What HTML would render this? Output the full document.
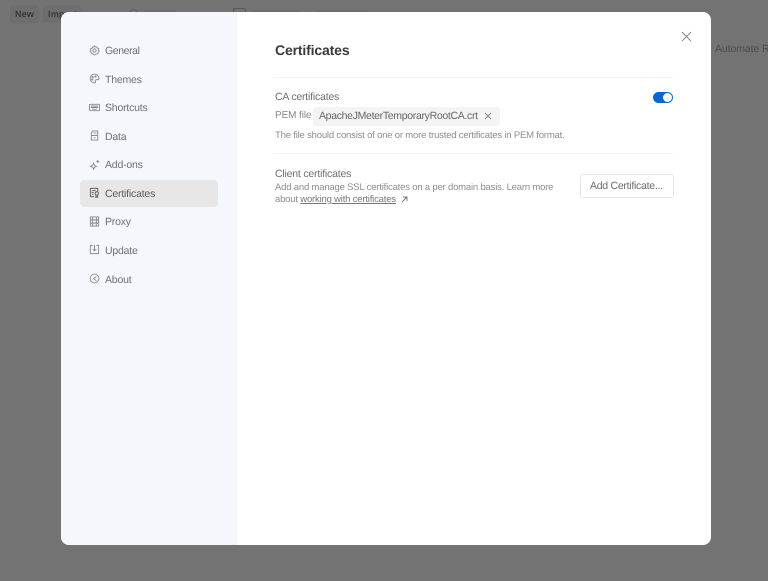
<!DOCTYPE html>
<html><head><meta charset="utf-8">
<style>
*{box-sizing:border-box}
html,body{margin:0;padding:0;width:768px;height:581px;overflow:hidden;background:#737373;font-family:"Liberation Sans",sans-serif;text-rendering:geometricPrecision}
.a{position:absolute;white-space:nowrap}
#modal{left:61px;top:12px;width:650px;height:533px;background:#fff;border-radius:8px;overflow:hidden}
#side{left:0;top:0;width:176px;height:533px;background:#f4f7fc;border-right:1px solid #f1f3f6}
.n{font-size:10.5px;color:#707070;left:105px;letter-spacing:-.2px;line-height:14px}
.i{left:89px;width:11px;height:11px}
.i *{fill:none;stroke:#8a8a8a;stroke-width:1}
.t{color:#707070;font-size:10.5px;line-height:14px;letter-spacing:-.2px}
.s{color:#8e8e8e;font-size:9.5px;line-height:13px;letter-spacing:-.19px}
.b{height:2px;top:10px;background:#6e6e6e}
</style></head><body>
<div class="a" style="left:10px;top:5px;width:29px;height:18px;background:#6e6e6e;border-radius:3px"></div>
<div class="a" style="left:15px;top:8px;font-size:9px;font-weight:bold;line-height:12px;color:#363636;letter-spacing:.2px">New</div>
<div class="a" style="left:43px;top:5px;width:38px;height:18px;background:#6e6e6e;border-radius:3px"></div>
<div class="a" style="left:48px;top:8px;font-size:9px;font-weight:bold;line-height:12px;color:#3a3a3a;letter-spacing:.2px">Import</div>
<div class="a" style="left:715px;top:42px;font-size:10.5px;line-height:14px;color:#4c4c4c;letter-spacing:-.1px">Automate Runs</div>
<div class="a" style="left:233px;top:8px;width:13px;height:6px;border:1px solid #585858;border-bottom:0;border-radius:2px 2px 0 0"></div>
<div class="a" style="left:130px;top:9px;width:7px;height:5px;border:1px solid #626262;border-bottom:0;border-radius:3px 3px 0 0"></div>
<div class="a b" style="left:145px;width:30px"></div>
<div class="a b" style="left:252px;width:48px"></div>
<div class="a b" style="left:316px;width:52px"></div>

<div class="a" id="modal"><div class="a" id="side"></div></div>
<div class="a" style="left:80px;top:180px;width:138px;height:27px;background:#e7e7e7;border-radius:4px"></div>

<svg class="a i" style="top:45px" viewBox="0 0 12 12"><path d="M6 1l1 1.200 1.600-.3.500 1.500 1.500.6-.4 1.500.9 1.500-1.200 1-.2 1.600-1.600.1L6 11l-1.600-1.300-1.500-.2-.3-1.500L1.300 7 2 5.500 1.800 4l1.500-.5.600-1.400 1.300.1z"/><circle cx="6" cy="6" r="1.800"/></svg>
<div class="a n" style="top:44px;letter-spacing:-.4px">General</div>
<svg class="a i" style="top:73px" viewBox="0 0 12 12"><path d="M6 1.200a4.800 4.800 0 1 0 0 9.600c1.300 0 1.300-1 .9-1.700-.5-.9 0-1.800 1-1.800h1.500c1 0 1.400-.7 1.400-1.500C10.800 3 8.600 1.200 6 1.200z"/><circle cx="4" cy="4.500" r=".7"/><circle cx="7" cy="3.800" r=".7"/><circle cx="3.500" cy="7" r=".7"/></svg>
<div class="a n" style="top:73px">Themes</div>
<svg class="a i" style="top:102px" viewBox="0 0 12 12"><rect x=".5" y="2.500" width="11" height="7" rx=".8"/><path d="M2 4.500h8M2 6h8M3.500 7.800h5"/></svg>
<div class="a n" style="top:101px">Shortcuts</div>
<svg class="a i" style="top:130px" viewBox="0 0 12 12"><path d="M4 1h5.500v10h-7V3z"/><path d="M2.500 6h7M5 8.500h2M5.500 2.500v1.500M7.500 2.500v1.500"/></svg>
<div class="a n" style="top:130px">Data</div>
<svg class="a i" style="top:159px" viewBox="0 0 12 12"><path d="M5 4.500l1 2.500 2.300 1-2.300 1L5 11.500 4 9 1.500 8 4 7z"/><path d="M9.500 1v3.400M7.800 2.700h3.400"/></svg>
<div class="a n" style="top:158px">Add-ons</div>
<svg class="a i" style="top:187px" viewBox="0 0 12 12"><path d="M5.500 10.500H1.500V1.500h8v3.500M3 4h4.500M3 6h2M3 8h2" style="stroke:#606060"/><circle cx="8.500" cy="7" r="1.800" style="stroke:#606060"/><path d="M7.500 8.500v2.800l1-.7 1 .7V8.500" style="stroke:#606060"/></svg>
<div class="a n" style="top:187px;color:#5c5c5c">Certificates</div>
<svg class="a i" style="top:216px" viewBox="0 0 12 12"><rect x="1.500" y="1" width="9" height="3.200"/><rect x="1.500" y="4.400" width="9" height="3.200"/><rect x="1.500" y="7.800" width="9" height="3.200"/><path d="M4 1v10M8 1v10"/></svg>
<div class="a n" style="top:215px">Proxy</div>
<svg class="a i" style="top:244px" viewBox="0 0 12 12"><path d="M4 1.500H1.500v9h9v-9H8M6 1v6.300M4 5.500l2 2 2-2"/></svg>
<div class="a n" style="top:244px">Update</div>
<svg class="a i" style="top:273px" viewBox="0 0 12 12"><circle cx="6" cy="6" r="4.800"/><path d="M8 3.800L5 6.300 8 8.500"/></svg>
<div class="a n" style="top:273px">About</div>

<div class="a" style="left:275px;top:42px;font-size:14px;font-weight:bold;line-height:17px;color:#3a3a3a;letter-spacing:-.15px">Certificates</div>
<svg class="a" style="left:681px;top:31px;width:11px;height:11px" viewBox="0 0 11 11"><path d="M1 1l9 9M10 1l-9 9" stroke="#858585" stroke-width="1" fill="none"/></svg>

<div class="a" style="left:273px;top:77px;width:400px;height:1px;background:#f3f3f3"></div>
<div class="a t" style="left:275px;top:90px">CA certificates</div>
<div class="a" style="left:653px;top:92px;width:20px;height:11px;border-radius:6px;background:#0a66d6"></div>
<div class="a" style="left:663px;top:93px;width:9px;height:9px;border-radius:50%;background:#fff"></div>
<div class="a t" style="left:275px;top:109px;color:#868686;font-size:10px;letter-spacing:-.1px">PEM file</div>
<div class="a" style="left:313px;top:107px;width:187px;height:19px;background:#f4f4f4;border-radius:3px"></div>
<div class="a t" style="left:319px;top:109px;color:#666;letter-spacing:-.32px">ApacheJMeterTemporaryRootCA.crt</div>
<svg class="a" style="left:484px;top:112px;width:8px;height:8px" viewBox="0 0 8 8"><path d="M1 1l6 6M7 1L1 7" stroke="#8a8a8a" stroke-width="1" fill="none"/></svg>
<div class="a s" style="left:275px;top:129px">The file should consist of one or more trusted certificates in PEM format.</div>
<div class="a" style="left:273px;top:153px;width:400px;height:1px;background:#f3f3f3"></div>
<div class="a t" style="left:275px;top:167px">Client certificates</div>
<div class="a s" style="left:275px;top:181px">Add and manage SSL certificates on a per domain basis. Learn more</div>
<div class="a s" style="left:275px;top:193px">about <span style="text-decoration:underline;color:#787878">working with certificates</span></div>
<svg class="a" style="left:401px;top:196px;width:7px;height:7px" viewBox="0 0 7 7"><path d="M1 6l5-5M2 1h4v4" stroke="#747474" stroke-width=".9" fill="none"/></svg>
<div class="a" style="left:580px;top:174px;width:94px;height:24px;background:#fff;border:1px solid #e6e6e6;border-radius:3px"></div>
<div class="a t" style="left:590px;top:179px;color:#6c6c6c;letter-spacing:-.27px">Add Certificate...</div>
</body></html>
